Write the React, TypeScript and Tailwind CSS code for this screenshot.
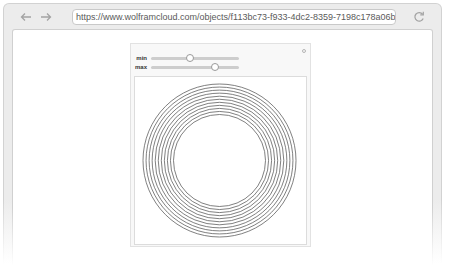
import React from "react";

const rings = Array.from({ length: 11 }, (_, i) => 46 + i * 3.05);

export default function App() {
  return (
    <div className="w-[474px] h-[268px] bg-white overflow-hidden pl-[3px] pt-[3px] font-['Liberation_Sans',sans-serif]">
      <div className="w-[439px] h-[290px] rounded-t-[6px] p-px bg-[linear-gradient(to_bottom,#d2d2d2_68%,#ffffff_90%)]">
        <div className="h-full rounded-t-[5px] bg-[linear-gradient(to_bottom,#ececec_68%,#ffffff_90%)] px-[8px] flex flex-col">
          <div className="h-[25px] flex items-center shrink-0">
            <svg width="12" height="10" viewBox="0 0 12 10" className="ml-[8px]">
              <path d="M11 5H1.5M5 1.5L1.5 5L5 8.5" fill="none" stroke="#a3a3a3" strokeWidth="1.3" />
            </svg>
            <svg width="12" height="10" viewBox="0 0 12 10" className="ml-[8px]">
              <path d="M1 5H10.5M7 1.5L10.5 5L7 8.5" fill="none" stroke="#a3a3a3" strokeWidth="1.3" />
            </svg>
            <div className="ml-[20px] mt-[1px] w-[324px] h-[16px] rounded-[4px] border border-[#c9c9c9] bg-white flex items-center pl-[3px] overflow-hidden">
              <span className="text-[9px] leading-none text-[#5a5a5a] whitespace-nowrap">
                https://www.wolframcloud.com/objects/f113bc73-f933-4dc2-8359-7198c178a06b
              </span>
            </div>
            <svg width="12" height="12" viewBox="0 0 12 12" className="ml-[17px] mt-[1px]">
              <path d="M9.6 3.2A4.3 4.3 0 1 0 10.2 7.5" fill="none" stroke="#a3a3a3" strokeWidth="1.2" />
              <path d="M10.3 0.8V3.8H7.3" fill="none" stroke="#a3a3a3" strokeWidth="1.2" />
            </svg>
          </div>
          <div className="flex-1 rounded-t-[3px] p-px bg-[linear-gradient(to_bottom,#d0d0d0_68%,#ffffff_90%)]">
            <div className="h-full rounded-t-[2px] bg-white pt-[13px] pl-[117px]">
              <div className="w-[181px] h-[204px] border border-[#e2e2e2] bg-[#f8f8f8] flex flex-col relative">
                <div className="absolute right-[4px] top-[5px] w-[4px] h-[4px] rounded-full border border-[#b5b5b5]" />
                <div className="pt-[11px] flex flex-col gap-[3px]">
                  <div className="flex items-center h-[6px]">
                    <span className="w-[16px] text-right text-[6px] font-bold leading-none text-[#333]">min</span>
                    <div className="ml-[4px] w-[88px] h-[3px] bg-[#cdcdcd] rounded-full relative">
                      <div className="absolute left-[35px] top-[-2.5px] w-[8px] h-[8px] rounded-full bg-white border border-[#9a9a9a]" />
                    </div>
                  </div>
                  <div className="flex items-center h-[6px]">
                    <span className="w-[16px] text-right text-[6px] font-bold leading-none text-[#333]">max</span>
                    <div className="ml-[4px] w-[88px] h-[3px] bg-[#cdcdcd] rounded-full relative">
                      <div className="absolute left-[60px] top-[-2.5px] w-[8px] h-[8px] rounded-full bg-white border border-[#9a9a9a]" />
                    </div>
                  </div>
                </div>
                <div className="mt-[6px] mx-[3px] flex-1 mb-[4px] border border-[#dcdcdc] bg-white">
                  <svg width="170" height="167" viewBox="0 0 170 167" className="block">
                    {rings.map((r, i) => (
                      <circle key={i} cx="84.5" cy="83.5" r={r} fill="none" stroke="#555" strokeWidth="0.75" />
                    ))}
                  </svg>
                </div>
              </div>
            </div>
          </div>
        </div>
      </div>
    </div>
  );
}
